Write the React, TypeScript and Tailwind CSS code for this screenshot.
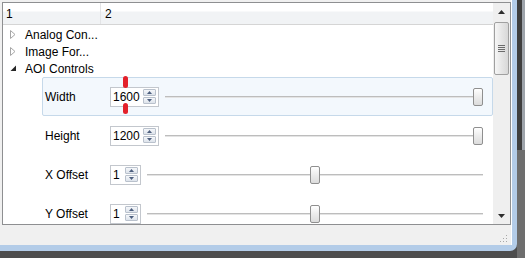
import React from "react";

type Row = { label: string; value: string; pct: number; wide?: boolean; selected?: boolean };

const rows: Row[] = [
  { label: "Width", value: "1600", pct: 100, wide: true, selected: true },
  { label: "Height", value: "1200", pct: 100, wide: true },
  { label: "X Offset", value: "1", pct: 50 },
  { label: "Y Offset", value: "1", pct: 50 },
];

function SpinButtons() {
  return (
    <div className="flex h-[15px] w-[13px] flex-col gap-px">
      <div className="flex flex-1 items-center justify-center rounded-[1px] border border-[#b9c1cc] bg-[linear-gradient(to_bottom,#f5f7fa,#dde3eb)]">
        <svg width="5" height="3" viewBox="0 0 5 3">
          <path d="M0 3 L2.5 0 L5 3 Z" fill="#4d5f7e" />
        </svg>
      </div>
      <div className="flex flex-1 items-center justify-center rounded-[1px] border border-[#b9c1cc] bg-[linear-gradient(to_bottom,#f5f7fa,#dde3eb)]">
        <svg width="5" height="3" viewBox="0 0 5 3">
          <path d="M0 0 L2.5 3 L5 0 Z" fill="#4d5f7e" />
        </svg>
      </div>
    </div>
  );
}

function Slider({ pct }: { pct: number }) {
  return (
    <div className="relative ml-[6px] mr-[9px] h-[18px] flex-1">
      <div className="absolute inset-x-0 top-[8px] h-[2px] border-t border-[#bdbdbd] bg-[#e4e4e4]" />
      <div
        className="absolute top-0 h-[18px] w-[10px] rounded-[2px] border border-[#8f8f8f] bg-[linear-gradient(to_bottom,#ffffff,#ececec_50%,#dcdcdc)]"
        style={{ left: `calc((100% - 10px) * ${pct / 100})` }}
      />
    </div>
  );
}

function ControlRow({ row }: { row: Row }) {
  return (
    <div
      className={`ml-[39px] flex h-[39px] items-center rounded-[2px] border pl-[2px] ${
        row.selected ? "border-[#c6d9ea] bg-[#f3f8fd]" : "border-transparent"
      }`}
    >
      <div className="w-[65px]">{row.label}</div>
      <div
        className={`flex h-[20px] items-center justify-between border border-[#c3c7cd] bg-white pl-[2px] pr-[2px] ${
          row.wide ? "w-[49px]" : "w-[31px]"
        }`}
      >
        <span className="leading-none">{row.value}</span>
        <SpinButtons />
      </div>
      <Slider pct={row.pct} />
    </div>
  );
}

function TreeRow({ label, open }: { label: string; open?: boolean }) {
  return (
    <div className="flex h-[17px] items-center pl-[7px]">
      <div className="flex w-[15px] items-center">
        {open ? (
          <svg width="7" height="7" viewBox="0 0 7 7">
            <path d="M6 0.5 L6 6 L0.5 6 Z" fill="#262626" />
          </svg>
        ) : (
          <svg width="6" height="9" viewBox="0 0 6 9">
            <path d="M0.5 0.5 L5 4.5 L0.5 8.5 Z" fill="none" stroke="#a6a6a6" />
          </svg>
        )}
      </div>
      <span>{label}</span>
    </div>
  );
}

function ScrollBar() {
  return (
    <div className="flex w-[17px] flex-col bg-[#efefef]">
      <div className="flex h-[18px] items-center justify-center">
        <svg width="7" height="4" viewBox="0 0 7 4">
          <path d="M0 4 L3.5 0 L7 4 Z" fill="#2e2e2e" />
        </svg>
      </div>
      <div className="mx-[1px] mt-[1px] flex h-[53px] flex-col items-center justify-center gap-[1px] rounded-[2px] border border-[#a0a0a0] bg-[linear-gradient(to_right,#f6f6f6,#e6e6e6_50%,#d8d8d8)]">
        <div className="h-px w-[7px] bg-[#6b6b6b]" />
        <div className="h-px w-[7px] bg-[#6b6b6b]" />
        <div className="h-px w-[7px] bg-[#6b6b6b]" />
        <div className="h-px w-[7px] bg-[#6b6b6b]" />
      </div>
      <div className="flex-1" />
      <div className="flex h-[17px] items-center justify-center">
        <svg width="7" height="4" viewBox="0 0 7 4">
          <path d="M0 0 L3.5 4 L7 0 Z" fill="#2e2e2e" />
        </svg>
      </div>
    </div>
  );
}

export default function App() {
  return (
    <div className="relative flex h-[258px] w-[525px] overflow-hidden bg-[#4d4d4d] font-['Liberation_Sans',Arial,sans-serif] text-[12px] text-black">
      <div className="flex h-[251px] w-[517px] rounded-br-[7px] bg-[#b3cce8] pb-[6px] pr-[5px]">
        <div className="flex h-[245px] w-[512px] flex-col border-r border-white bg-[#f0f0f0]">
          <div className="ml-[2px] mt-[2px] flex h-[223px] w-[509px] border border-[#8e8f91] bg-white">
            <div className="flex w-[490px] flex-col overflow-hidden">
              <div className="flex h-[22px] shrink-0 border-b border-[#d5d5d5] bg-[linear-gradient(to_bottom,#ffffff_0%,#ffffff_40%,#f1f3f5_41%,#f1f3f5_100%)]">
                <div className="flex w-[98px] items-center border-r border-[#e3e4e6] pl-[3px]">1</div>
                <div className="flex items-center pl-[4px]">2</div>
              </div>
              <div className="flex flex-col pt-[1px]">
                <TreeRow label="Analog Con..." />
                <TreeRow label="Image For..." />
                <TreeRow label="AOI Controls" open />
                {rows.map((r) => (
                  <ControlRow key={r.label} row={r} />
                ))}
              </div>
            </div>
            <ScrollBar />
          </div>
          <div className="flex flex-1 items-end justify-end pb-[2px] pr-[3px]">
            <svg width="9" height="9" viewBox="0 0 9 9">
              <g fill="#a8a8a8">
                <rect x="7" y="1" width="1" height="1" />
                <rect x="4" y="4" width="1" height="1" />
                <rect x="7" y="4" width="1" height="1" />
                <rect x="1" y="7" width="1" height="1" />
                <rect x="4" y="7" width="1" height="1" />
                <rect x="7" y="7" width="1" height="1" />
              </g>
            </svg>
          </div>
        </div>
      </div>
      <div className="flex flex-1 flex-col">
        <div className="flex h-[150px]">
          <div className="w-[5px] bg-[#3f3f3f]" />
          <div className="flex-1 bg-[#9ea4ab]" />
        </div>
        <div className="flex-1 bg-[#6e6e6e]" />
      </div>
      <div className="absolute left-[123px] top-[76px] h-[12px] w-[5px] rounded-full bg-[#e3202a]" />
      <div className="absolute left-[123px] top-[103px] h-[11px] w-[5px] rounded-full bg-[#e3202a]" />
    </div>
  );
}
